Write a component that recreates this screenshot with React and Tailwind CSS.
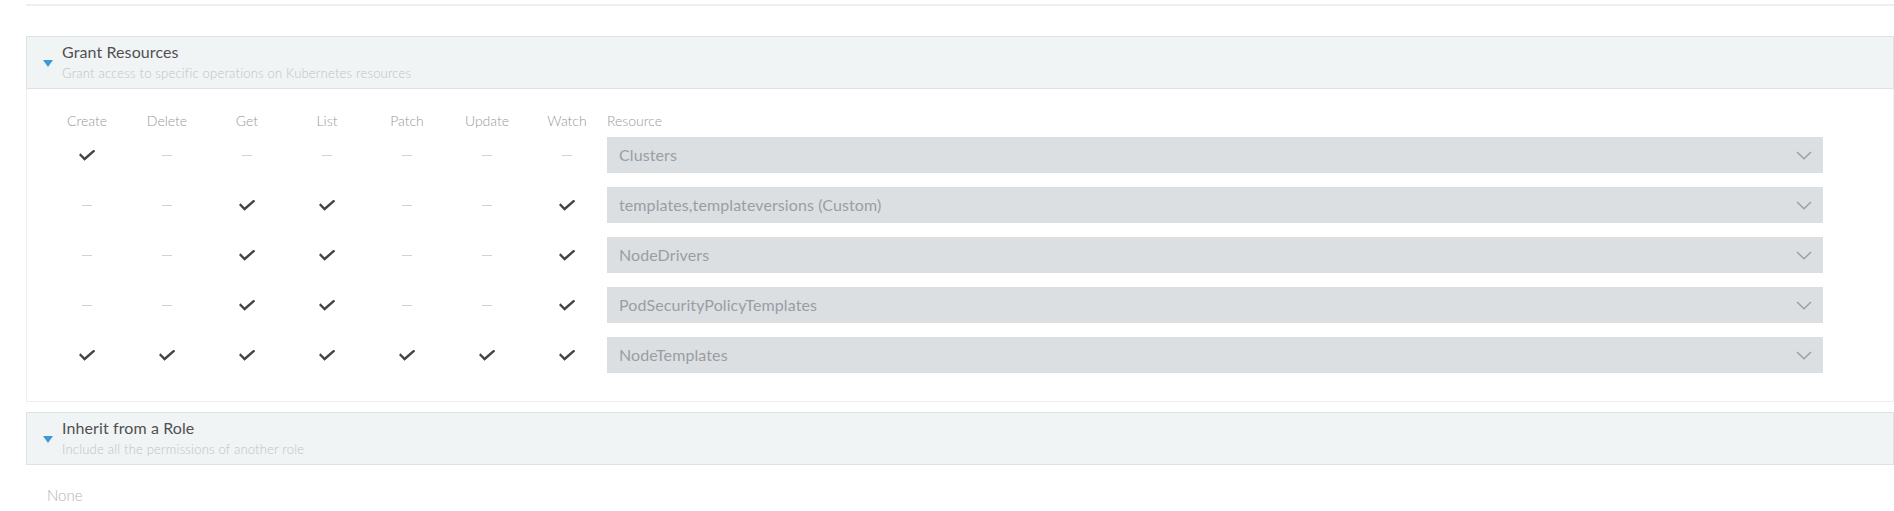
import { useState } from "react";

// --- datos ---
const VERBS = ["Create", "Delete", "Get", "List", "Patch", "Update", "Watch"];

const RULES = [
  { resource: "Clusters", verbs: ["Create"] },
  { resource: "templates,templateversions (Custom)", verbs: ["Get", "List", "Watch"] },
  { resource: "NodeDrivers", verbs: ["Get", "List", "Watch"] },
  { resource: "PodSecurityPolicyTemplates", verbs: ["Get", "List", "Watch"] },
  { resource: "NodeTemplates", verbs: VERBS },
];

function Check() {
  return (
    <svg width="16" height="11" viewBox="0 0 16 11" className="block">
      <polyline points="1.6,5 5.6,9 14.6,1.2" fill="none" stroke="#444444" strokeWidth="2.4" strokeLinecap="square" />
    </svg>
  );
}

function Chevron() {
  return (
    <svg width="16" height="9" viewBox="0 0 16 9" className="block">
      <polyline points="1,1 8,7.8 15,1" fill="none" stroke="#9a9ea3" strokeWidth="1.4" />
    </svg>
  );
}

function SectionHeader({ title, subtitle, open, onToggle }) {
  return (
    <div
      onClick={onToggle}
      className="flex items-center h-[53px] bg-[#f0f4f5] border border-[#dde2e5] cursor-pointer pl-[16px]"
    >
      <span
        className={
          "block w-0 h-0 border-l-[5px] border-r-[5px] border-t-[7px] border-l-transparent border-r-transparent border-t-[#3d98d3] mt-[1px] mr-[9px] " +
          (open ? "" : "-rotate-90")
        }
      />
      <div className="flex flex-col -mt-[3px]">
        <span className="text-[16px] leading-[20px] tracking-[0.1px] text-[#505050]">{title}</span>
        <span className="text-[13px] leading-[16px] mt-[3px] tracking-[0.2px] font-light text-[#bfc3c7]">{subtitle}</span>
      </div>
    </div>
  );
}

export default function App() {
  const [grantOpen, setGrantOpen] = useState(true);
  const [inheritOpen, setInheritOpen] = useState(true);

  return (
    <div
      className="min-h-screen bg-white pl-[26px] pt-[4px]"
      style={{ fontFamily: "Lato, 'Noto Sans', sans-serif" }}
    >
      <div className="h-[2px] bg-[#eceef1]" />

      {/* Grant Resources */}
      <div className="mt-[30px]">
        <SectionHeader
          title="Grant Resources"
          subtitle="Grant access to specific operations on Kubernetes resources"
          open={grantOpen}
          onToggle={() => setGrantOpen(!grantOpen)}
        />
        {grantOpen && (
          <div className="border-x border-b border-[#eeeeee] pl-[20px] pr-[70px] pt-[19px] pb-[28px]">
            <div className="grid grid-cols-[repeat(7,80px)_1fr] h-[24px] items-center mb-[5px] text-[14px] font-light text-[#999999]">
              {VERBS.map((v) => (
                <div key={v} className="text-center">{v}</div>
              ))}
              <div>Resource</div>
            </div>

            {RULES.map((r, i) => (
              <div
                key={i}
                className="grid grid-cols-[repeat(7,80px)_1fr] h-[36px] items-center mb-[14px] last:mb-0"
              >
                {VERBS.map((v) => (
                  <div key={v} className="flex justify-center">
                    {r.verbs.includes(v) ? (
                      <Check />
                    ) : (
                      <span className="block w-[10px] h-px bg-[#d2d2d2]" />
                    )}
                  </div>
                ))}
                <div className="h-[36px] bg-[#dcdfe2] flex items-center justify-between pl-[12px] pr-[11px]">
                  <span className="text-[16px] tracking-[0.1px] text-[#999ea3]">{r.resource}</span>
                  <Chevron />
                </div>
              </div>
            ))}
          </div>
        )}
      </div>

      {/* Inherit from a Role */}
      <div className="mt-[10px]">
        <SectionHeader
          title="Inherit from a Role"
          subtitle="Include all the permissions of another role"
          open={inheritOpen}
          onToggle={() => setInheritOpen(!inheritOpen)}
        />
        {inheritOpen && (
          <div className="pl-[21px] pt-[19px] text-[15px] leading-[22px] font-light text-[#b0b0b0]">None</div>
        )}
      </div>
    </div>
  );
}
